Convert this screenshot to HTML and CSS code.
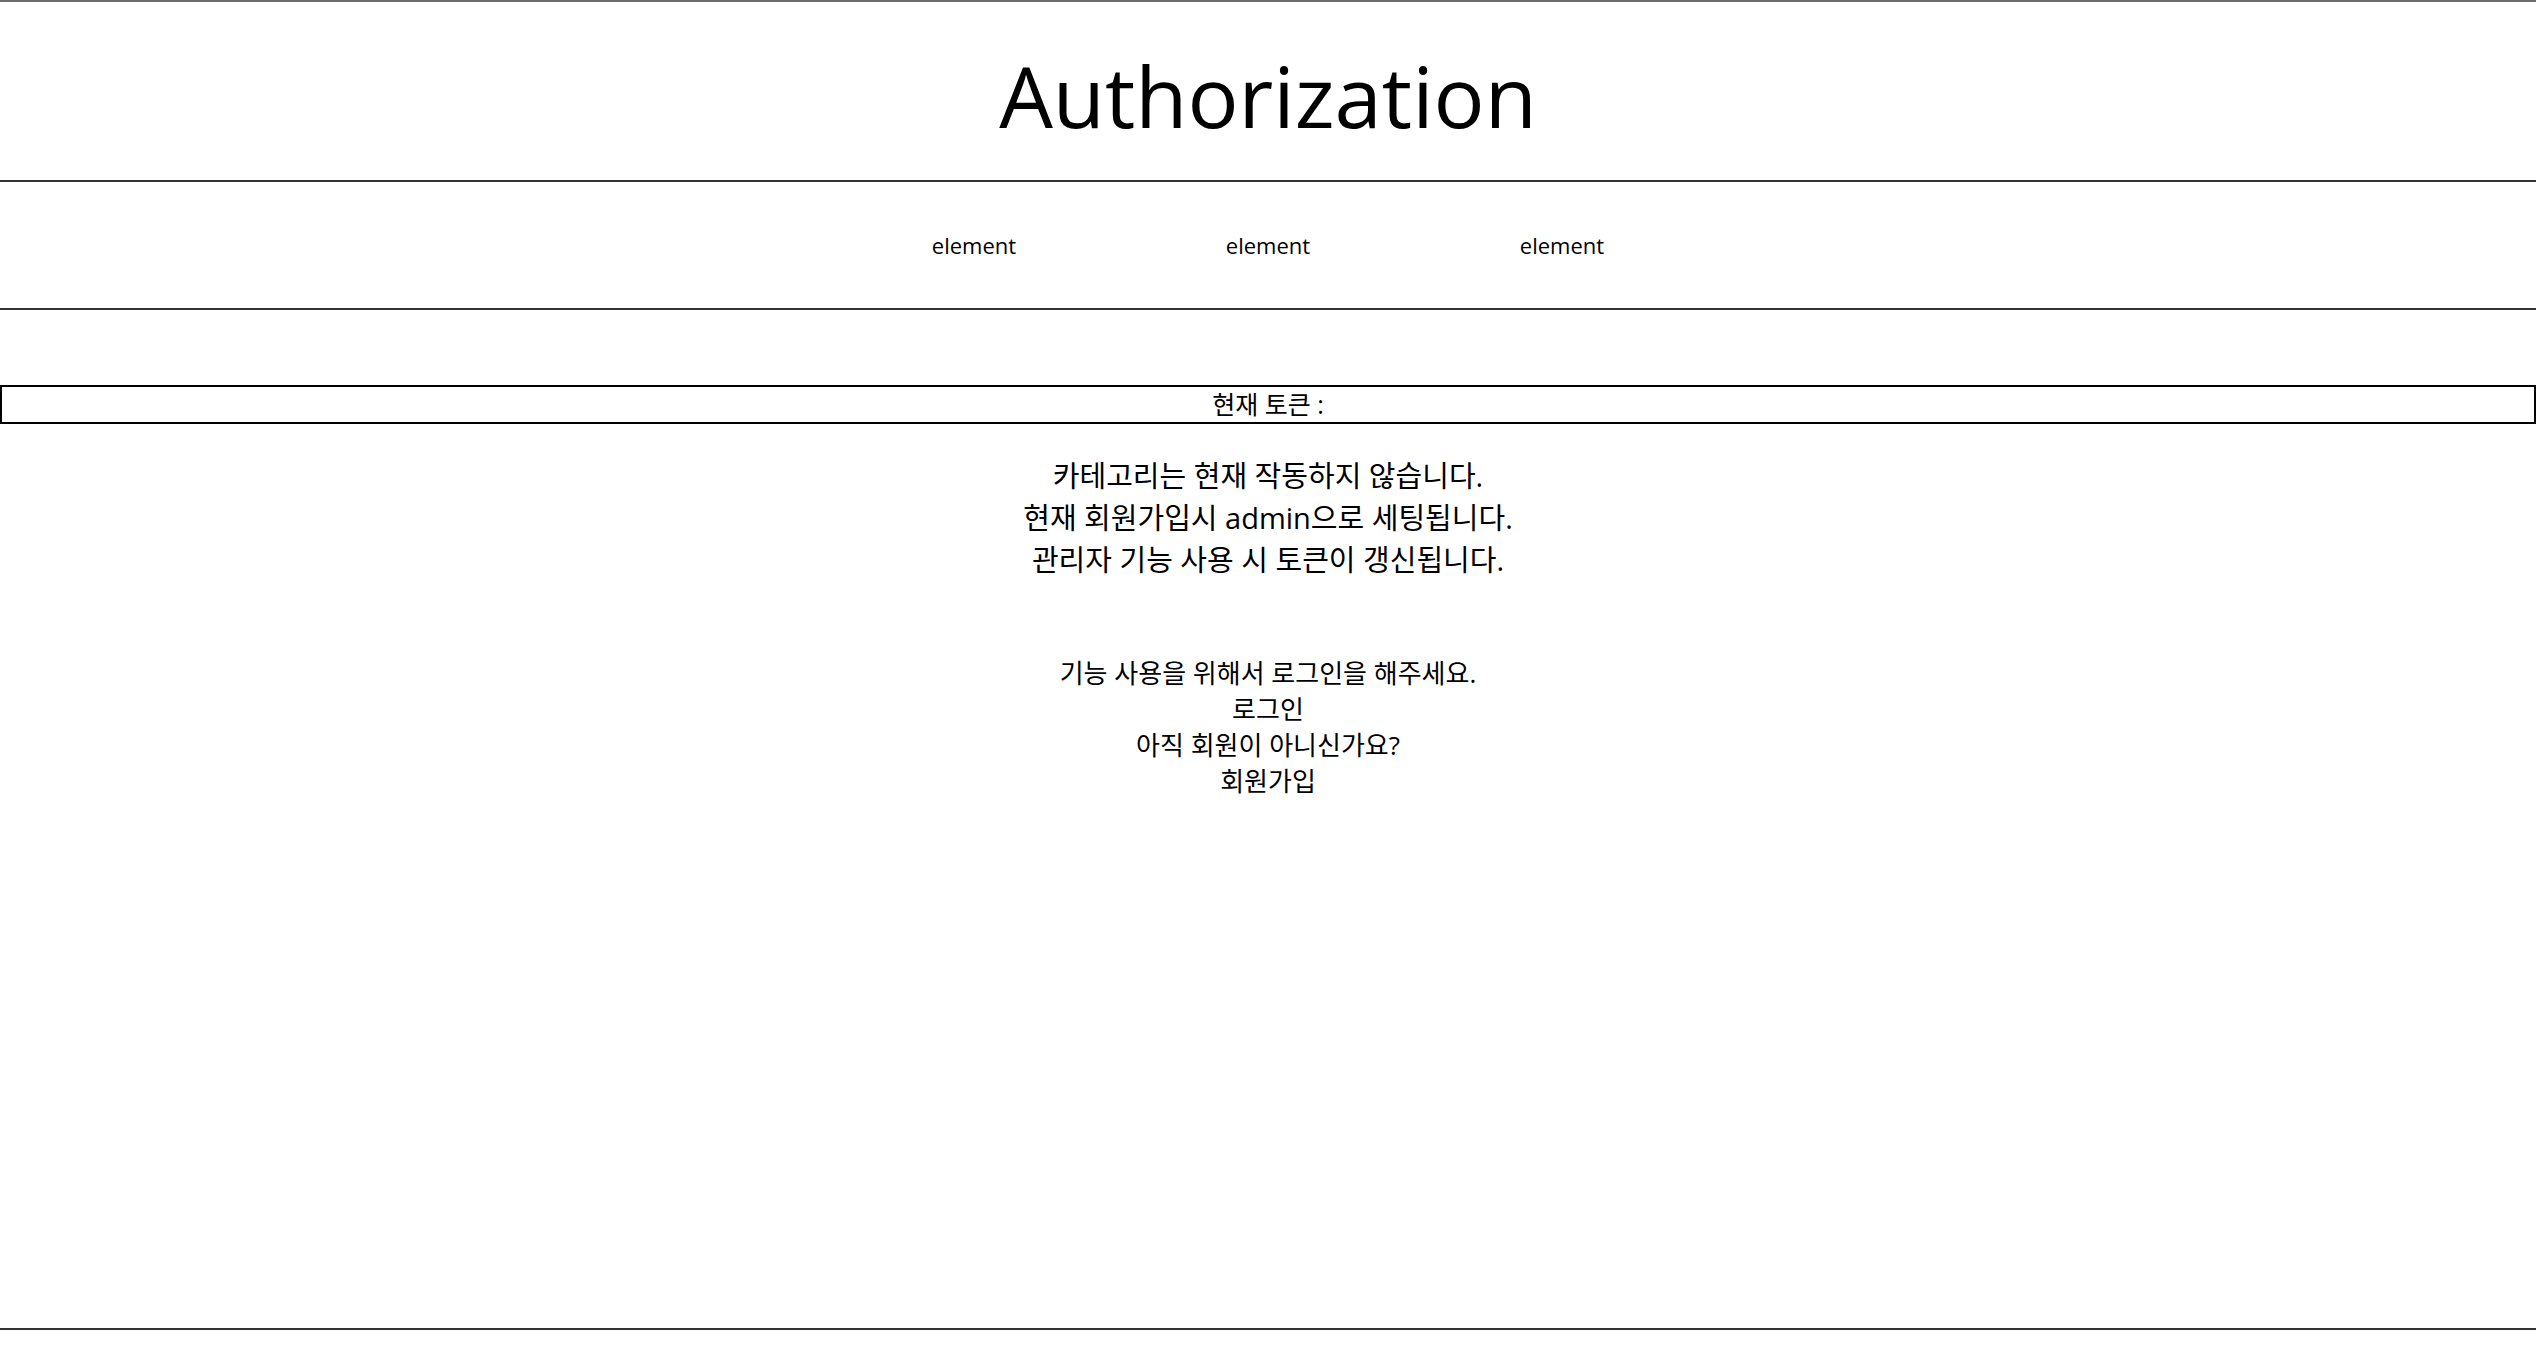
FILE: index.html
```html
<!DOCTYPE html>
<html lang="ko">
  <head>
    <meta charset="UTF-8" />
    <meta name="viewport" content="width=device-width, initial-scale=1.0" />
    <title>Authorization</title>
    <link rel="stylesheet" href="styles.css">
  </head>
  <body>
    <header class="site-header">
      <h1>Authorization</h1>
    </header>

    <nav class="category-nav">
      <a href="#" class="category-item">element</a>
      <a href="#" class="category-item">element</a>
      <a href="#" class="category-item">element</a>
    </nav>

    <main class="content">
      <div class="token-box">현재 토큰 :</div>

      <div class="notice">
        <p>카테고리는 현재 작동하지 않습니다.</p>
        <p>현재 회원가입시 admin으로 세팅됩니다.</p>
        <p>관리자 기능 사용 시 토큰이 갱신됩니다.</p>
      </div>

      <div class="auth-links">
        <p>기능 사용을 위해서 로그인을 해주세요.</p>
        <a href="/login">로그인</a>
        <p>아직 회원이 아니신가요?</p>
        <a href="/register">회원가입</a>
      </div>
    </main>

    <footer class="site-footer"></footer>
  </body>
</html>
```

FILE: styles.css
```css
* {
  margin: 0;
  padding: 0;
  box-sizing: border-box;
}

body {
  font-family: "Open Sans", "Noto Sans CJK KR", sans-serif;
  color: #000;
  background: #fff;
  min-height: 100vh;
  display: flex;
  flex-direction: column;
}

.site-header {
  height: 182px;
  border-top: 2px solid #6b6b6b;
  border-bottom: 2px solid #333;
  display: flex;
  align-items: center;
  justify-content: center;
}

.site-header h1 {
  font-size: 85px;
  font-weight: 400;
  line-height: 1;
  padding-top: 8px;
}

.category-nav {
  height: 128px;
  border-bottom: 2px solid #333;
  display: flex;
  align-items: center;
  justify-content: center;
}

.category-item {
  width: 294px;
  text-align: center;
  font-size: 22px;
  color: #000;
  text-decoration: none;
}

.content {
  flex: 1;
  padding-top: 75px;
  text-align: center;
}

.token-box {
  border: 2px solid #000;
  height: 39px;
  line-height: 35px;
  font-size: 25px;
}

.notice {
  margin-top: 31px;
  font-size: 29px;
  line-height: 42px;
}

.auth-links {
  margin-top: 74px;
  font-size: 26px;
  line-height: 36px;
}

.auth-links a {
  display: block;
  color: #000;
  text-decoration: none;
}

.site-footer {
  height: 41px;
  border-top: 2px solid #333;
}
```
